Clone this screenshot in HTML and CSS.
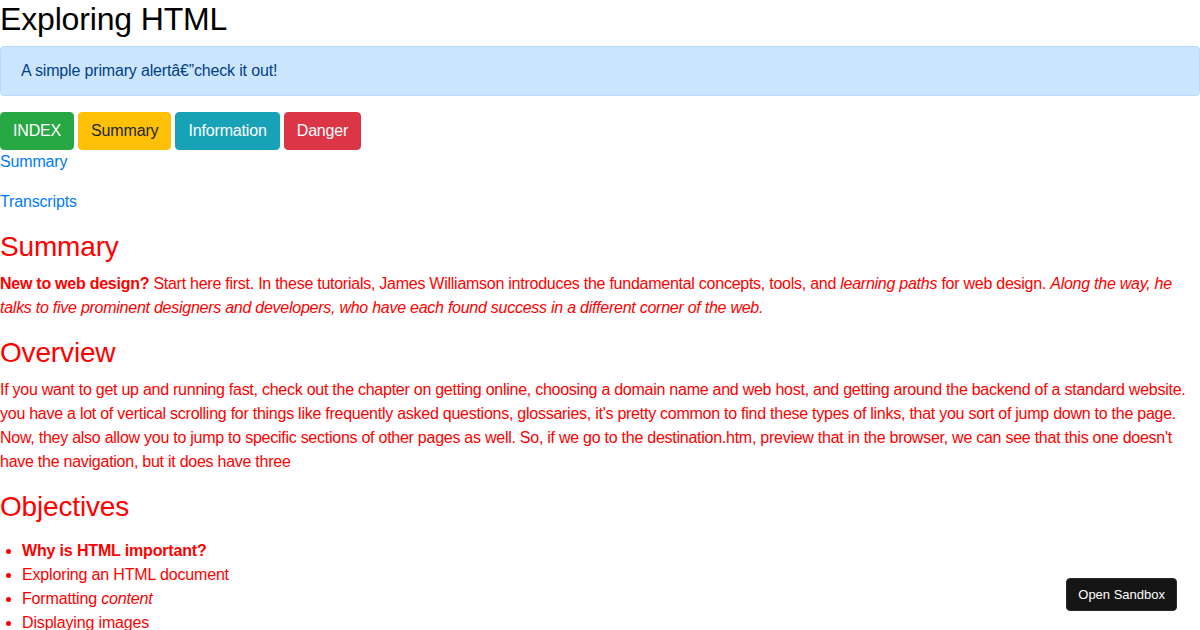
FILE: index.html
```
<!DOCTYPE html>
<html lang="en">
  <head>
    <meta charset="utf-8" />
    <title>Exploring HTML</title>
    <link rel="stylesheet" href="styles.css">
  </head>
  <body>
    <h1>Exploring HTML</h1>
    <div class="alert alert-primary" role="alert">A simple primary alertâ€”check it out!</div>
    <div class="btn-row">
      <button type="button" class="btn btn-success">INDEX</button>
      <button type="button" class="btn btn-warning">Summary</button>
      <button type="button" class="btn btn-info">Information</button>
      <button type="button" class="btn btn-danger">Danger</button>
    </div>
    <p><a href="#summary">Summary</a></p>
    <p><a href="#transcripts">Transcripts</a></p>

    <section class="content">
      <h2 id="summary">Summary</h2>
      <p><strong>New to web design?</strong> Start here first. In these tutorials, James Williamson introduces the fundamental concepts, tools, and <em>learning paths</em> for web design. <em>Along the way, he talks to five prominent designers and developers, who have each found success in a different corner of the web.</em></p>

      <h2>Overview</h2>
      <p>If you want to get up and running fast, check out the chapter on getting online, choosing a domain name and web host, and getting around the backend of a standard website. you have a lot of vertical scrolling for things like frequently asked questions, glossaries, it's pretty common to find these types of links, that you sort of jump down to the page. Now, they also allow you to jump to specific sections of other pages as well. So, if we go to the destination.htm, preview that in the browser, we can see that this one doesn't have the navigation, but it does have three</p>

      <h2>Objectives</h2>
      <ul class="objectives">
        <li><strong>Why is HTML important?</strong></li>
        <li>Exploring an HTML document</li>
        <li>Formatting <em>content</em></li>
        <li>Displaying images</li>
        <li>Linking to pages</li>
      </ul>
    </section>

    <a class="sandbox-link" href="#">Open Sandbox</a>
  </body>
</html>
```

FILE: styles.css
```
body {
  margin: 0;
  font-family: "Liberation Sans", Arial, sans-serif;
  font-size: 16px;
  line-height: 1.5;
  letter-spacing: -0.01em;
  color: #000;
  background: #fff;
}

h1, h2 {
  margin: 0 0 8px;
  font-weight: 400;
  line-height: 1.2;
}

h1 {
  font-size: 32px;
}

h2 {
  font-size: 28px;
}

p {
  margin: 0 0 16px;
}

a {
  color: #007bff;
  text-decoration: none;
}

.alert {
  padding: 12px 20px;
  margin-bottom: 16px;
  border: 1px solid transparent;
  border-radius: 4px;
}

.alert-primary {
  color: #004085;
  background: #cce5ff;
  border-color: #b8daff;
}

.btn-row {
  display: flex;
  gap: 4px;
}

.btn {
  font-family: inherit;
  font-size: 16px;
  letter-spacing: inherit;
  line-height: 24px;
  padding: 6px 12px;
  border: 1px solid transparent;
  border-radius: 4px;
  color: #fff;
  cursor: pointer;
}

.btn-success { background: #28a745; border-color: #28a745; }
.btn-warning { background: #ffc107; border-color: #ffc107; color: #212529; }
.btn-info    { background: #17a2b8; border-color: #17a2b8; }
.btn-danger  { background: #dc3545; border-color: #dc3545; }

.content {
  color: red;
}

.content p {
  letter-spacing: -0.016em;
}

.objectives {
  margin: 16px 0;
  padding-left: 22px;
}

.sandbox-link {
  position: fixed;
  right: 23px;
  bottom: 19px;
  padding: 7px 11px;
  background: #151515;
  color: #fff;
  font-size: 13px;
  line-height: 17px;
  letter-spacing: 0;
  border-radius: 4px;
  border: 1px solid #2a2a2a;
}
```
